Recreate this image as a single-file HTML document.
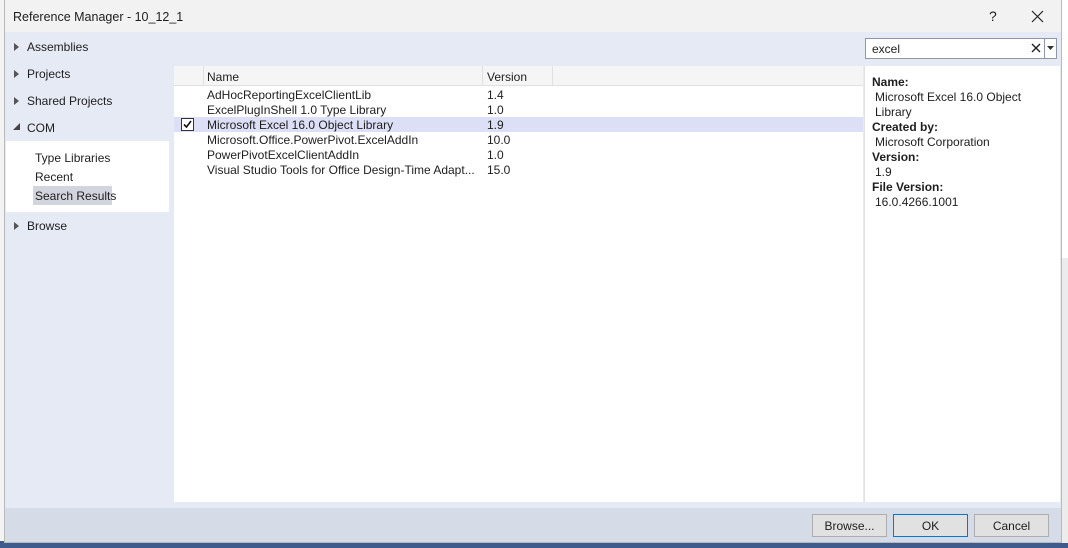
<!DOCTYPE html>
<html><head><meta charset="utf-8"><style>
*{margin:0;padding:0;box-sizing:border-box}
body{width:1068px;height:548px;position:relative;overflow:hidden;background:#fff;font-family:"Liberation Sans",sans-serif;font-size:12px;color:#1e1e1e}
.a{position:absolute}
.t{position:absolute;white-space:nowrap;line-height:15px;margin-top:1px}
.tri{position:absolute;width:0;height:0;border-top:4px solid transparent;border-bottom:4px solid transparent;border-left:5px solid #555}
</style></head><body>
<div class="a" style="left:0;top:0;width:4px;height:548px;background:#f3f3f3"></div>
<div class="a" style="left:0;top:541px;width:1068px;height:7px;background:#3f5a8c"></div>
<div class="a" style="left:1062px;top:258px;width:6px;height:285px;background:#ececec"></div>
<div class="a" style="left:4px;top:0;width:1058px;height:543px;background:#e6eaf5;border:1px solid #b9b9b9;border-top:none"></div>
<div class="a" style="left:5px;top:0;width:1056px;height:32px;background:#f2f2f2"></div>
<div class="t" style="left:13px;top:9px;font-size:12.5px">Reference Manager - 10_12_1</div>
<div class="t" style="left:989px;top:8px;font-size:14px">?</div>
<svg class="a" style="left:1031px;top:10px" width="13" height="13"><path d="M1 1L12 12M12 1L1 12" stroke="#222" stroke-width="1.2"/></svg>
<div class="tri" style="left:14px;top:43px"></div><div class="t" style="left:27px;top:39px">Assemblies</div>
<div class="tri" style="left:14px;top:70px"></div><div class="t" style="left:27px;top:66px">Projects</div>
<div class="tri" style="left:14px;top:97px"></div><div class="t" style="left:27px;top:93px">Shared Projects</div>
<svg class="a" style="left:13px;top:123px" width="8" height="8"><path d="M7 0L7 7L0 7Z" fill="#444"/></svg>
<div class="t" style="left:27px;top:120px">COM</div>
<div class="a" style="left:6px;top:141px;width:163px;height:71px;background:#fff"></div>
<div class="t" style="left:35px;top:150px">Type Libraries</div>
<div class="t" style="left:35px;top:169px">Recent</div>
<div class="a" style="left:33px;top:186px;width:79px;height:19px;background:#d2d5de"></div>
<div class="t" style="left:35px;top:188px">Search Results</div>
<div class="tri" style="left:14px;top:222px"></div><div class="t" style="left:27px;top:218px">Browse</div>
<div class="a" style="left:865px;top:38px;width:192px;height:21px;background:#fff;border:1px solid #8e96a8"></div>
<div class="t" style="left:872px;top:41px">excel</div>
<svg class="a" style="left:1031px;top:43px" width="10" height="10"><path d="M1 1L9 9M9 1L1 9" stroke="#222" stroke-width="1.4"/></svg>
<div class="a" style="left:1044px;top:39px;width:1px;height:19px;background:#8e96a8"></div>
<svg class="a" style="left:1047px;top:46px" width="7" height="4"><path d="M0 0L7 0L3.5 4Z" fill="#333"/></svg>
<div class="a" style="left:174px;top:66px;width:689px;height:436px;background:#fff"></div>
<div class="a" style="left:174px;top:66px;width:689px;height:20px;background:#f5f5f5;border-bottom:1px solid #e0e0e0"></div>
<div class="a" style="left:203px;top:66px;width:1px;height:20px;background:#e0e0e0"></div>
<div class="a" style="left:482px;top:66px;width:1px;height:20px;background:#e0e0e0"></div>
<div class="a" style="left:552px;top:66px;width:1px;height:20px;background:#e0e0e0"></div>
<div class="t" style="left:207px;top:69px">Name</div>
<div class="t" style="left:487px;top:69px">Version</div>
<div class="a" style="left:174px;top:117px;width:689px;height:15px;background:#dcdff5"></div>
<div class="a" style="left:181px;top:118px;width:13px;height:13px;border:1px solid #333;background:#fff"></div>
<svg class="a" style="left:182px;top:119px" width="11" height="11"><path d="M2 5.5L4.5 8L9 2" stroke="#111" stroke-width="1.6" fill="none"/></svg>
<div class="t" style="left:207px;top:87px">AdHocReportingExcelClientLib</div><div class="t" style="left:487px;top:87px">1.4</div>
<div class="t" style="left:207px;top:102px">ExcelPlugInShell 1.0 Type Library</div><div class="t" style="left:487px;top:102px">1.0</div>
<div class="t" style="left:207px;top:117px">Microsoft Excel 16.0 Object Library</div><div class="t" style="left:487px;top:117px">1.9</div>
<div class="t" style="left:207px;top:132px">Microsoft.Office.PowerPivot.ExcelAddIn</div><div class="t" style="left:487px;top:132px">10.0</div>
<div class="t" style="left:207px;top:147px">PowerPivotExcelClientAddIn</div><div class="t" style="left:487px;top:147px">1.0</div>
<div class="t" style="left:207px;top:162px">Visual Studio Tools for Office Design-Time Adapt...</div><div class="t" style="left:487px;top:162px">15.0</div>
<div class="a" style="left:864px;top:66px;width:196px;height:436px;background:#fff;border-left:1px solid #e3e3e3"></div>
<div class="t" style="left:872px;top:74px;font-weight:bold">Name:</div>
<div class="t" style="left:875px;top:89px">Microsoft Excel 16.0 Object</div>
<div class="t" style="left:875px;top:104px">Library</div>
<div class="t" style="left:872px;top:119px;font-weight:bold">Created by:</div>
<div class="t" style="left:875px;top:134px">Microsoft Corporation</div>
<div class="t" style="left:872px;top:149px;font-weight:bold">Version:</div>
<div class="t" style="left:875px;top:164px">1.9</div>
<div class="t" style="left:872px;top:179px;font-weight:bold">File Version:</div>
<div class="t" style="left:875px;top:194px">16.0.4266.1001</div>
<div class="a" style="left:5px;top:508px;width:1056px;height:34px;background:#d6dbe8"></div>
<div class="a" style="left:812px;top:514px;width:75px;height:23px;background:#e1e1e1;border:1px solid #adadad;text-align:center;line-height:22px">Browse...</div>
<div class="a" style="left:893px;top:514px;width:75px;height:23px;background:#e1e1e1;border:1px solid #0078d7;text-align:center;line-height:22px">OK</div>
<div class="a" style="left:974px;top:514px;width:75px;height:23px;background:#e1e1e1;border:1px solid #adadad;text-align:center;line-height:22px">Cancel</div>
</body></html>
